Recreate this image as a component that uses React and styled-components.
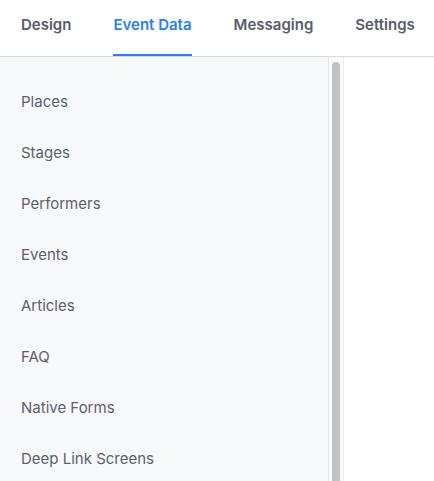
import React from "react";
import styled, { createGlobalStyle } from "styled-components";

const Global = createGlobalStyle`
  html, body { margin: 0; padding: 0; height: 100%; overflow: hidden; background: #ffffff; }
  #root { height: 100%; }
  * { box-sizing: border-box; }
`;

const Page = styled.div`
  height: 100%;
  display: flex;
  flex-direction: column;
  font-family: Inter, "Noto Sans", sans-serif;
`;

const TabBar = styled.nav`
  display: flex;
  gap: 42px;
  padding-left: 21px;
  height: 57px;
  flex-shrink: 0;
  border-bottom: 1px solid #d8dae0;
`;

const Tab = styled.div`
  padding-top: 16px;
  font-size: 15px;
  line-height: 18px;
  font-weight: 600;
  color: ${(p) => (p.$active ? "#2b7ff6" : "#575d6a")};
  border-bottom: 2px solid ${(p) => (p.$active ? "#2b7ff6" : "transparent")};
  margin-bottom: -1px;
  height: 56px;
  white-space: nowrap;
`;

const Body = styled.div`
  flex: 1;
  min-height: 0;
  display: flex;
  overflow: hidden;
`;

const Sidebar = styled.aside`
  width: 328px;
  flex-shrink: 0;
  height: 100%;
  overflow: hidden;
  background: #f7f8fa;
  padding-top: 19px;
`;

const ScrollTrack = styled.div`
  width: 16px;
  flex-shrink: 0;
  height: 100%;
  background: #fafafa;
  border-left: 1px solid #e6e6e6;
  border-right: 1px solid #ececec;
  padding: 5px 3px 0 3px;
`;

const ScrollThumb = styled.div`
  width: 8px;
  height: 440px;
  border-radius: 4px;
  background: #c1c1c1;
`;

const Item = styled.div`
  height: 51px;
  display: flex;
  align-items: center;
  padding-left: 21px;
  font-size: 15px;
  line-height: 18px;
  color: #5b616e;
`;

const Main = styled.main`
  flex: 1;
  background: #ffffff;
`;

const tabs = ["Design", "Event Data", "Messaging", "Settings"];
const items = [
  "Places",
  "Stages",
  "Performers",
  "Events",
  "Articles",
  "FAQ",
  "Native Forms",
  "Deep Link Screens",
];

export default function App() {
  return (
    <Page>
      <Global />
      <TabBar>
        {tabs.map((t) => (
          <Tab key={t} $active={t === "Event Data"}>
            {t}
          </Tab>
        ))}
      </TabBar>
      <Body>
        <Sidebar>
          {items.map((i) => (
            <Item key={i}>{i}</Item>
          ))}
        </Sidebar>
        <ScrollTrack>
          <ScrollThumb />
        </ScrollTrack>
        <Main />
      </Body>
    </Page>
  );
}
